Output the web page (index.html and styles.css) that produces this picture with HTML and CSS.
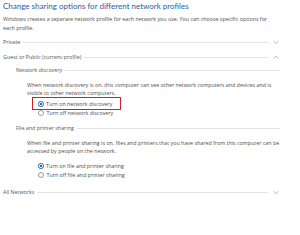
FILE: index.html
```html
<!DOCTYPE html>
<html>
<head>
<meta charset="utf-8">
<link rel="stylesheet" href="styles.css">
</head>
<body>
<div class="page">
  <h1 class="title">Change sharing options for different network profiles</h1>
  <p class="desc desc-top">Windows creates a separate network profile for each network you use. You can choose specific options for each profile.</p>

  <div class="row row-private">
    <span class="label">Private</span><span class="rule"></span>
    <svg class="chev" viewBox="0 0 8 5" width="8" height="5"><path d="M1.5 1.2 L4 3.6 L6.5 1.2" fill="none" stroke="#9a9a9a" stroke-width="0.7"/></svg>
  </div>

  <div class="row row-guest">
    <span class="label">Guest or Public (current profile)</span><span class="rule"></span>
    <svg class="chev" viewBox="0 0 8 5" width="8" height="5"><path d="M1.5 3.6 L4 1.2 L6.5 3.6" fill="none" stroke="#9a9a9a" stroke-width="0.7"/></svg>
  </div>

  <div class="sub">
    <div class="row row-sub row-nd">
      <span class="label">Network discovery</span><span class="rule"></span>
    </div>
    <div class="inner">
      <p class="desc desc-nd">When network discovery is on, this computer can see other network computers and devices and is visible to other network computers.</p>
      <div class="radios radios-nd">
        <div class="opt opt-marked"><span class="radio on"></span><span>Turn on network discovery</span></div>
        <div class="opt"><span class="radio"></span><span>Turn off network discovery</span></div>
      </div>
    </div>

    <div class="row row-sub row-fp">
      <span class="label">File and printer sharing</span><span class="rule"></span>
    </div>
    <div class="inner">
      <p class="desc desc-fp">When file and printer sharing is on, files and printers that you have shared from this computer can be accessed by people on the network.</p>
      <div class="radios radios-fp">
        <div class="opt"><span class="radio on"></span><span>Turn on file and printer sharing</span></div>
        <div class="opt"><span class="radio"></span><span>Turn off file and printer sharing</span></div>
      </div>
    </div>
  </div>

  <div class="row row-all">
    <span class="label">All Networks</span><span class="rule"></span>
    <svg class="chev" viewBox="0 0 8 5" width="8" height="5"><path d="M1.5 1.2 L4 3.6 L6.5 1.2" fill="none" stroke="#9a9a9a" stroke-width="0.7"/></svg>
  </div>
</div>
</body>
</html>
```

FILE: styles.css
```css
html, body {
  margin: 0;
  padding: 0;
  background: #ffffff;
}
.page {
  width: 294px;
  padding: 0 0 0 3px;
  font-family: "Open Sans", "Noto Sans", sans-serif;
  color: #4a4a4a;
}
.title {
  margin: 0;
  font-family: Lato, "Open Sans", sans-serif;
  font-size: 8px;
  line-height: 12px;
  font-weight: 400;
  color: #2d5c9c;
  white-space: nowrap;
}
.desc {
  margin: 2.5px 0 0 0;
  font-size: 5.35px;
  line-height: 9px;
  color: #4d4d4d;
}
.desc-top { max-width: 272px; }
.row {
  display: flex;
  align-items: center;
  height: 9px;
  margin-right: 17px;
  font-size: 5.35px;
  line-height: 9px;
  color: #555555;
}
.label {
  white-space: nowrap;
}
.rule {
  flex: 1;
  height: 1px;
  background: #e3e3e3;
  margin-left: 3px;
}
.chev {
  width: 8px;
  margin-left: 4px;
  flex: none;
}
.row-private { margin-top: 5px; }
.row-guest { margin-top: 6.5px; }
.sub { padding-left: 13px; }
.row-nd { margin-top: 3.5px; }
.inner { padding-left: 11px; }
.desc-nd { margin-top: 6px; line-height: 8.5px; max-width: 250px; }
.desc-fp { margin-top: 6.25px; line-height: 8.5px; max-width: 258px; }
.radios { display: flex; flex-direction: column; align-items: flex-start; padding-left: 11px; }
.radios-nd { margin-top: 2px; }
.radios-fp { margin-top: 5.75px; }
.row-fp { margin-top: 6px; }
.row-all { margin-top: 8px; }
.opt {
  display: flex;
  align-items: center;
  height: 9px;
  font-size: 5.35px;
  line-height: 9px;
  color: #4d4d4d;
  white-space: nowrap;
}
.radio {
  width: 4px;
  height: 4px;
  border-radius: 50%;
  border: 0.8px solid #9a9a9a;
  margin-right: 2.5px;
  box-sizing: content-box;
  flex: none;
}
.radio.on {
  border: 1.2px solid #1f5fbf;
  width: 3.6px;
  height: 3.6px;
  background: radial-gradient(circle, #1f5fbf 0 45%, #ffffff 55%);
}
.opt-marked { position: relative; }
.opt-marked::after {
  content: "";
  position: absolute;
  left: -6px;
  right: -9px;
  top: -2.5px;
  bottom: -1.5px;
  border: 1.5px solid #d0202a;
}
```
